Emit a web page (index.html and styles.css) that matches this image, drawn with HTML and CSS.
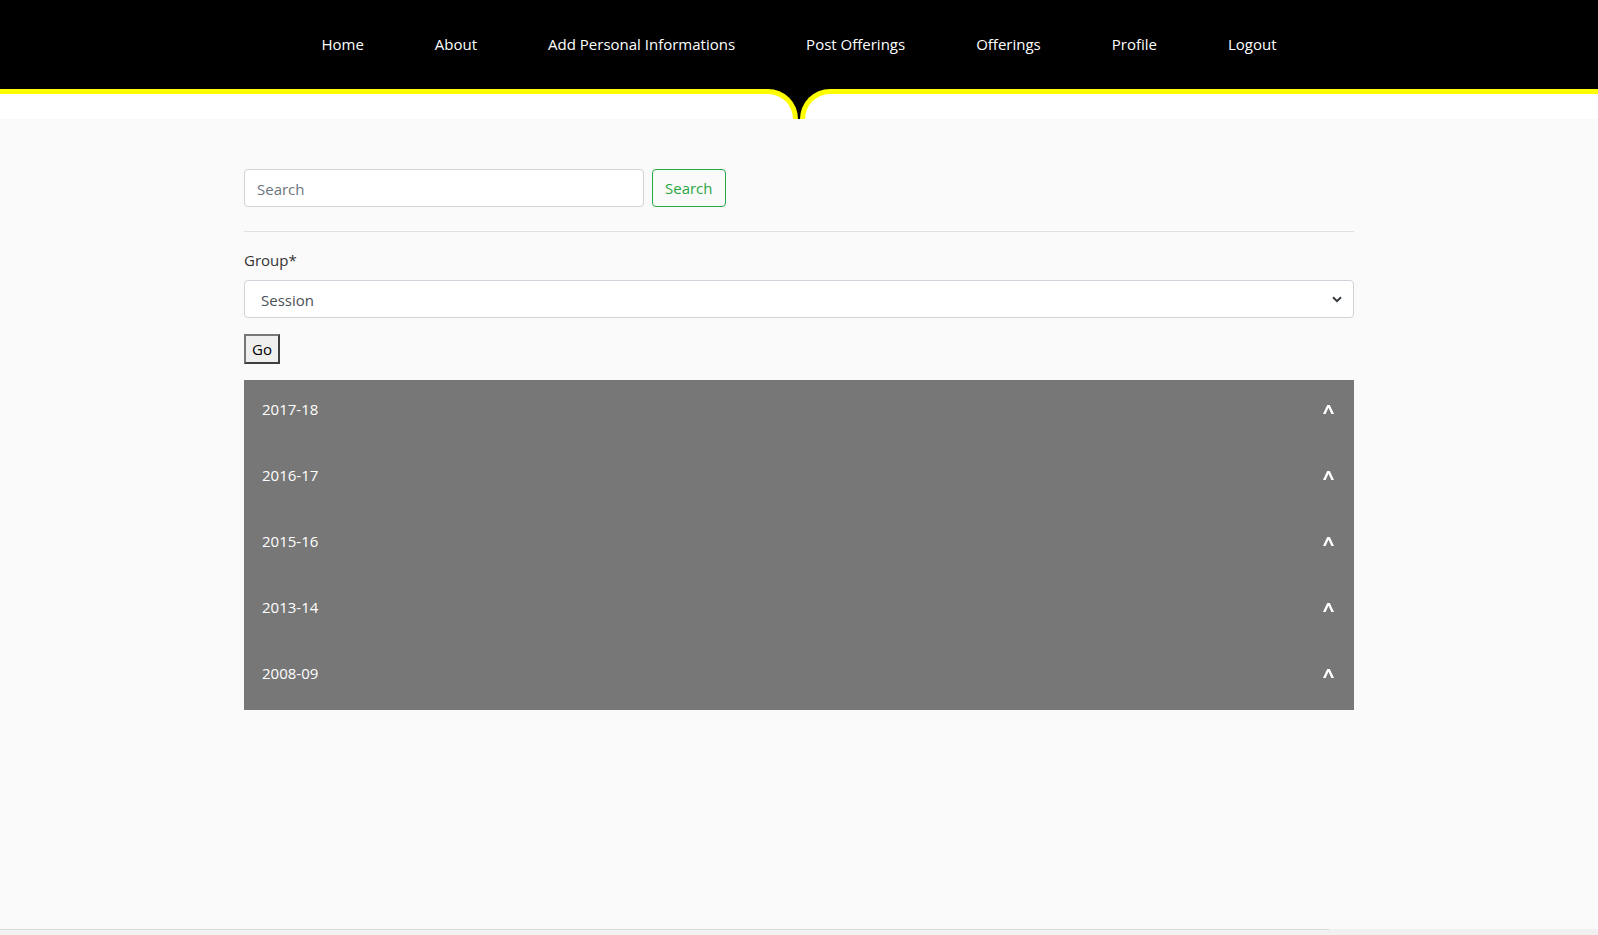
FILE: index.html
```html
<!DOCTYPE html>
<html lang="en">
<head>
<meta charset="utf-8">
<title>Offerings</title>
<link rel="stylesheet" href="styles.css">
</head>
<body>
<header class="topbar">
  <nav class="nav">
    <a class="nav-link" href="#">Home</a>
    <a class="nav-link" href="#">About</a>
    <a class="nav-link" href="#">Add Personal Informations</a>
    <a class="nav-link" href="#">Post Offerings</a>
    <a class="nav-link" href="#">Offerings</a>
    <a class="nav-link" href="#">Profile</a>
    <a class="nav-link" href="#">Logout</a>
  </nav>
  <div class="curve">
    <div class="curve-left"></div>
    <div class="curve-right"></div>
  </div>
</header>

<main class="container">
  <form class="search-form">
    <input class="search-input" type="text" placeholder="Search">
    <button class="btn-search" type="button">Search</button>
  </form>
  <hr class="divider">
  <label class="group-label">Group*</label>
  <div class="select-wrap">
    <select class="group-select">
      <option>Session</option>
    </select>
    <svg class="select-caret" width="10" height="7" viewBox="0 0 10 7"><polyline points="1,1.2 5,5.2 9,1.2" fill="none" stroke="#343a40" stroke-width="2"/></svg>
  </div>
  <button class="btn-go" type="button">Go</button>

  <div class="sessions">
    <div class="session-row"><span>2017-18</span><svg class="chev" width="11" height="9" viewBox="0 0 11 9"><polygon points="0,9 4.2,0 6.8,0 11,9 8.4,9 5.5,2.8 2.6,9" fill="#fff"/></svg></div>
    <div class="session-row"><span>2016-17</span><svg class="chev" width="11" height="9" viewBox="0 0 11 9"><polygon points="0,9 4.2,0 6.8,0 11,9 8.4,9 5.5,2.8 2.6,9" fill="#fff"/></svg></div>
    <div class="session-row"><span>2015-16</span><svg class="chev" width="11" height="9" viewBox="0 0 11 9"><polygon points="0,9 4.2,0 6.8,0 11,9 8.4,9 5.5,2.8 2.6,9" fill="#fff"/></svg></div>
    <div class="session-row"><span>2013-14</span><svg class="chev" width="11" height="9" viewBox="0 0 11 9"><polygon points="0,9 4.2,0 6.8,0 11,9 8.4,9 5.5,2.8 2.6,9" fill="#fff"/></svg></div>
    <div class="session-row"><span>2008-09</span><svg class="chev" width="11" height="9" viewBox="0 0 11 9"><polygon points="0,9 4.2,0 6.8,0 11,9 8.4,9 5.5,2.8 2.6,9" fill="#fff"/></svg></div>
  </div>
</main>

<div class="hscroll"><div class="hscroll-thumb"></div></div>
</body>
</html>
```

FILE: styles.css
```css
* { box-sizing: border-box; }

html, body {
  margin: 0;
  padding: 0;
}

body {
  background: #fafafa;
  font-family: "Open Sans", "Noto Sans", sans-serif;
  font-size: 15px;
  line-height: 24px;
  color: #212529;
  min-height: 935px;
}

.topbar {
  background: #000;
}

.nav {
  display: flex;
  justify-content: center;
  align-items: center;
  height: 89px;
  padding-bottom: 2px;
}

.nav-link {
  color: #fff;
  text-decoration: none;
  font-size: 15px;
  padding: 0 35.5px;
}

.curve {
  display: flex;
  height: 30px;
  background: #000;
}

.curve-left,
.curve-right {
  flex: 1;
  background: #fff;
  border-top: 5px solid #ffff00;
}

.curve-left {
  border-right: 5px solid #ffff00;
  border-top-right-radius: 30px;
  margin-right: 1px;
}

.curve-right {
  border-left: 5px solid #ffff00;
  border-top-left-radius: 30px;
  margin-left: 1px;
}

.container {
  width: 1110px;
  margin: 50px auto 0;
}

.search-form {
  display: flex;
  gap: 8px;
  align-items: center;
}

.search-input {
  width: 400px;
  height: 38px;
  padding: 7px 12px 5px;
  border: 1px solid #ced4da;
  border-radius: 4px;
  background: #fff;
  font-family: inherit;
  font-size: 15px;
  color: #495057;
  outline: none;
}

.search-input::placeholder {
  color: #6c757d;
}

.btn-search {
  height: 38px;
  padding: 6px 12px;
  border: 1px solid #28a745;
  border-radius: 4px;
  background: transparent;
  color: #28a745;
  font-family: inherit;
  font-size: 15px;
  line-height: 24px;
}

.divider {
  margin: 24px 0 16px;
  border: 0;
  border-top: 1px solid rgba(0, 0, 0, 0.1);
  height: 0;
}

.group-label {
  display: block;
  margin-bottom: 8px;
  color: #333;
}

.select-wrap {
  position: relative;
}

.group-select {
  display: block;
  width: 100%;
  height: 38px;
  padding: 7px 28px 5px 16px;
  border: 1px solid #ced4da;
  border-radius: 4px;
  background: #fff;
  font-family: inherit;
  font-size: 15px;
  color: #495057;
  appearance: none;
  -webkit-appearance: none;
  outline: none;
}

.select-caret {
  position: absolute;
  right: 12px;
  top: 16px;
}

.btn-go {
  display: block;
  margin-top: 16px;
  height: 30px;
  padding: 1px 6px;
  background: #efefef;
  border-style: solid;
  border-width: 2px;
  border-color: #767676 #3f3f3f #3f3f3f #767676;
  font-family: inherit;
  font-size: 15px;
  line-height: 22px;
  color: #000;
}

.sessions {
  margin-top: 16px;
  background: #777;
}

.session-row {
  display: flex;
  justify-content: space-between;
  align-items: center;
  height: 66px;
  padding: 0 20px 8px 18px;
  color: #fff;
}

.chev {
  display: block;
}

.hscroll {
  position: fixed;
  left: 0;
  right: 0;
  bottom: 0;
  height: 6px;
  background: #f1f1f1;
}

.hscroll-thumb {
  width: 1329px;
  height: 100%;
  border-top: 1px solid #d9d9d9;
  background: #f1f1f1;
}
```
